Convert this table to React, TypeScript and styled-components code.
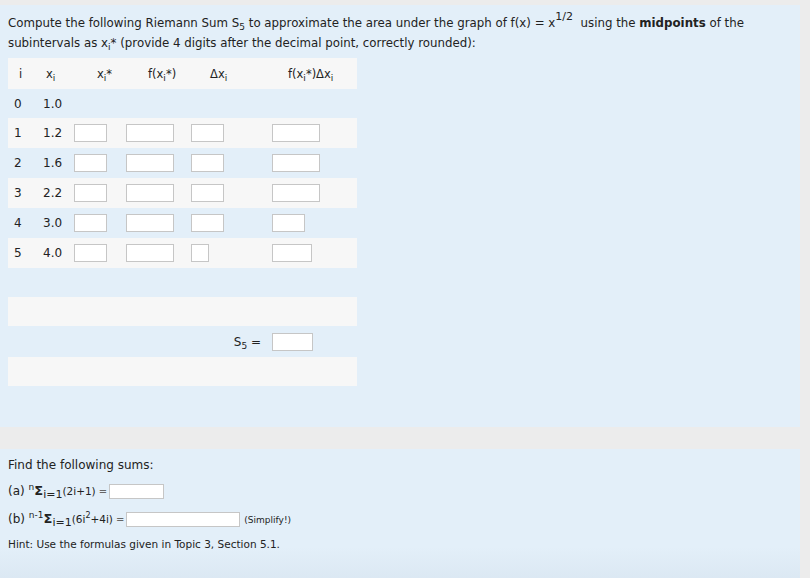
import styled, { createGlobalStyle } from "styled-components"

const GlobalStyle = createGlobalStyle`
  html, body {
    margin: 0;
    padding: 0;
    background: #ececec;
  }
  body {
    font-family: "DejaVu Sans", Verdana, sans-serif;
    color: #222;
  }
`

const Page = styled.div`
  width: 810px;
  height: 578px;
  overflow: hidden;
  padding-top: 5px;
  box-sizing: border-box;
  display: flex;
  flex-direction: column;
  gap: 22px;
`

const Panel = styled.div<{ $h: number; $fade?: boolean }>`
  width: 800px;
  height: ${(p) => p.$h}px;
  flex-shrink: 0;
  box-sizing: border-box;
  padding: 0 8px;
  background: ${(p) =>
    p.$fade ? "linear-gradient(#e3eff9 0%, #e3eff9 70%, #d9e6f1 100%)" : "#e3eff9"};
`

const Intro = styled.p`
  margin: 0;
  padding-top: 8px;
  font-size: 11.8px;
  line-height: 20px;
  width: 770px;
`

const Sub = styled.sub<{ $size?: number }>`
  font-size: ${(p) => p.$size ?? 9}px;
  vertical-align: -3px;
  line-height: 0;
`

const Sup = styled.sup<{ $size?: number; $up?: number }>`
  font-size: ${(p) => p.$size ?? 10}px;
  vertical-align: ${(p) => p.$up ?? 6}px;
  line-height: 0;
`

const Table = styled.div`
  margin-top: 5px;
  width: 349px;
  display: flex;
  flex-direction: column;
`

const Row = styled.div<{ $h: number; $shade?: boolean }>`
  height: ${(p) => p.$h}px;
  display: grid;
  grid-template-columns: 28px 34px 52px 65px 81px 1fr;
  align-items: center;
  background: ${(p) => (p.$shade ? "#f7f7f7" : "transparent")};
  font-size: 12px;
`

const HeadCell = styled.div<{ $pad: number }>`
  padding-left: ${(p) => p.$pad}px;
  font-size: 11.5px;
  white-space: nowrap;
`

const Cell = styled.div<{ $pad: number }>`
  padding-left: ${(p) => p.$pad}px;
  display: flex;
  align-items: center;
  white-space: nowrap;
`

const Box = styled.input<{ $w: number; $h?: number }>`
  width: ${(p) => p.$w}px;
  height: ${(p) => p.$h ?? 18}px;
  box-sizing: border-box;
  border: 1px solid #c6c6c6;
  background: #fff;
  padding: 0;
  margin: 0;
  outline: none;
  vertical-align: middle;
`

const SumLabel = styled.div`
  grid-column: 1 / 6;
  justify-self: end;
  padding-right: 7px;
  font-size: 12px;
`

const Para = styled.div<{ $top: number; $size?: number; $lh?: number }>`
  margin-top: ${(p) => p.$top}px;
  font-size: ${(p) => p.$size ?? 12}px;
  line-height: ${(p) => p.$lh ?? 18}px;
  white-space: nowrap;
`

const Math = styled.span`
  font-size: 10.5px;
`

const Sigma = styled.span`
  font-weight: bold;
  font-size: 13px;
`

const Eq = styled.span`
  color: #666;
  font-size: 10px;
  margin: 0 2px 0 3px;
`

const Note = styled.span`
  font-size: 9px;
  margin-left: 4px;
`

const Xi = ({ star }: { star?: boolean }) => (
  <>
    x<Sub>i</Sub>
    {star ? "*" : ""}
  </>
)

const data = [
  { i: 0, x: "1.0", w: null },
  { i: 1, x: "1.2", w: [33, 48, 33, 48] },
  { i: 2, x: "1.6", w: [33, 48, 33, 48] },
  { i: 3, x: "2.2", w: [33, 48, 33, 48] },
  { i: 4, x: "3.0", w: [33, 48, 33, 33] },
  { i: 5, x: "4.0", w: [33, 48, 18, 40] },
]

export default function App() {
  return (
    <>
      <GlobalStyle />
      <Page>
        <Panel $h={422}>
          <Intro>
            Compute the following Riemann Sum S<Sub>5</Sub> to approximate the area under the
            graph of f(x) = x<Sup $size={11} $up={7}>1/2</Sup>&nbsp; using the <b>midpoints</b> of
            the subintervals as x<Sub>i</Sub>* (provide 4 digits after the decimal point,
            correctly rounded):
          </Intro>
          <Table>
            <Row $h={31} $shade>
              <HeadCell $pad={11}>i</HeadCell>
              <HeadCell $pad={10}>
                <Xi />
              </HeadCell>
              <HeadCell $pad={27}>
                <Xi star />
              </HeadCell>
              <HeadCell $pad={26}>
                f(<Xi star />)
              </HeadCell>
              <HeadCell $pad={23}>
                Δ<Xi />
              </HeadCell>
              <HeadCell $pad={20}>
                f(<Xi star />)Δ<Xi />
              </HeadCell>
            </Row>
            {data.map((r, n) => (
              <Row key={r.i} $h={n === 0 ? 29 : 30} $shade={n % 2 === 1}>
                <Cell $pad={6}>{r.i}</Cell>
                <Cell $pad={7}>{r.x}</Cell>
                {r.w
                  ? r.w.map((w, k) => (
                      <Cell key={k} $pad={4}>
                        <Box $w={w} />
                      </Cell>
                    ))
                  : null}
              </Row>
            ))}
            <Row $h={29} />
            <Row $h={29} $shade />
            <Row $h={31}>
              <SumLabel>
                S<Sub>5</Sub> =
              </SumLabel>
              <Cell $pad={4}>
                <Box $w={41} />
              </Cell>
            </Row>
            <Row $h={29} $shade />
          </Table>
        </Panel>
        <Panel $h={140} $fade>
          <Para $top={7}>Find the following sums:</Para>
          <Para $top={8} $lh={18}>
            (a){" "}
            <Math>
              <Sup $size={9} $up={5}>n</Sup>
              <Sigma>Σ</Sigma>
              <Sub $size={11}>i=1</Sub>(2i+1)
            </Math>
            <Eq>=</Eq>
            <Box $w={55} $h={15} />
          </Para>
          <Para $top={9} $lh={18}>
            (b){" "}
            <Math>
              <Sup $size={9} $up={5}>n-1</Sup>
              <Sigma>Σ</Sigma>
              <Sub $size={11}>i=1</Sub>(6i<Sup $size={8} $up={5}>2</Sup>+4i)
            </Math>
            <Eq>=</Eq>
            <Box $w={114} $h={15} />
            <Note>(Simplify!)</Note>
          </Para>
          <Para $top={6} $size={10.5}>
            Hint: Use the formulas given in Topic 3, Section 5.1.
          </Para>
        </Panel>
      </Page>
    </>
  )
}
